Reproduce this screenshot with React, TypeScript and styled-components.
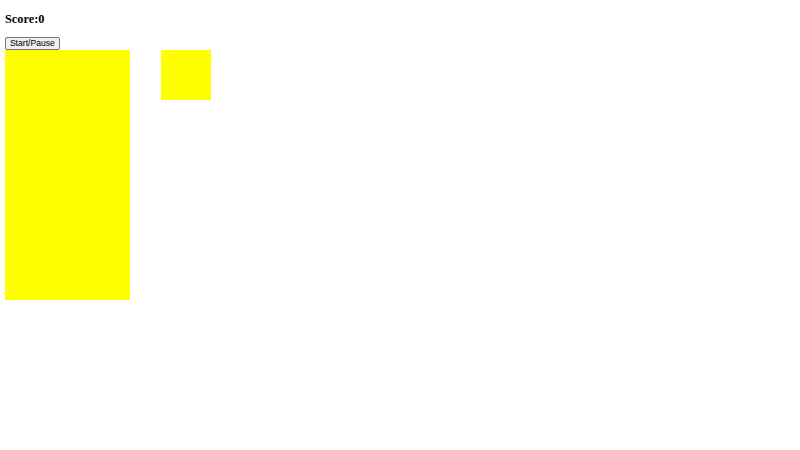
import React from "react";
import styled, { createGlobalStyle } from "styled-components";

const Global = createGlobalStyle`
  html, body { background: #ffffff; }
  body {
    margin: 5px;
    font-family: "Liberation Serif", "Times New Roman", serif;
    color: #000000;
  }
`;

const Score = styled.h3`
  font-family: "Liberation Serif", "Times New Roman", serif;
  font-size: 12.3px;
  font-weight: bold;
  line-height: 13.45px;
  margin: 7.5px 0 10.9px;
`;

const Button = styled.button`
  display: block;
  font-family: "Liberation Sans", Arial, sans-serif;
  font-size: 8.6px;
  line-height: 9.6px;
  padding: 0.7px 3.9px;
  margin: 0;
  background: #efefef;
  border: 1px solid #767676;
  border-radius: 2px;
  color: #000000;
  cursor: pointer;
`;

const Stage = styled.div`
  display: flex;
  align-items: flex-start;
  gap: 31px;
`;

const Panel = styled.div<{ $w: number; $h: number }>`
  width: ${(p) => p.$w}px;
  height: ${(p) => p.$h}px;
  background: #ffff00;
  flex: none;
`;

export default function App() {
  return (
    <>
      <Global />
      <Score>Score:0</Score>
      <Button type="button">Start/Pause</Button>
      <Stage>
        <Panel $w={125} $h={250} />
        <Panel $w={50} $h={50} />
      </Stage>
    </>
  );
}
